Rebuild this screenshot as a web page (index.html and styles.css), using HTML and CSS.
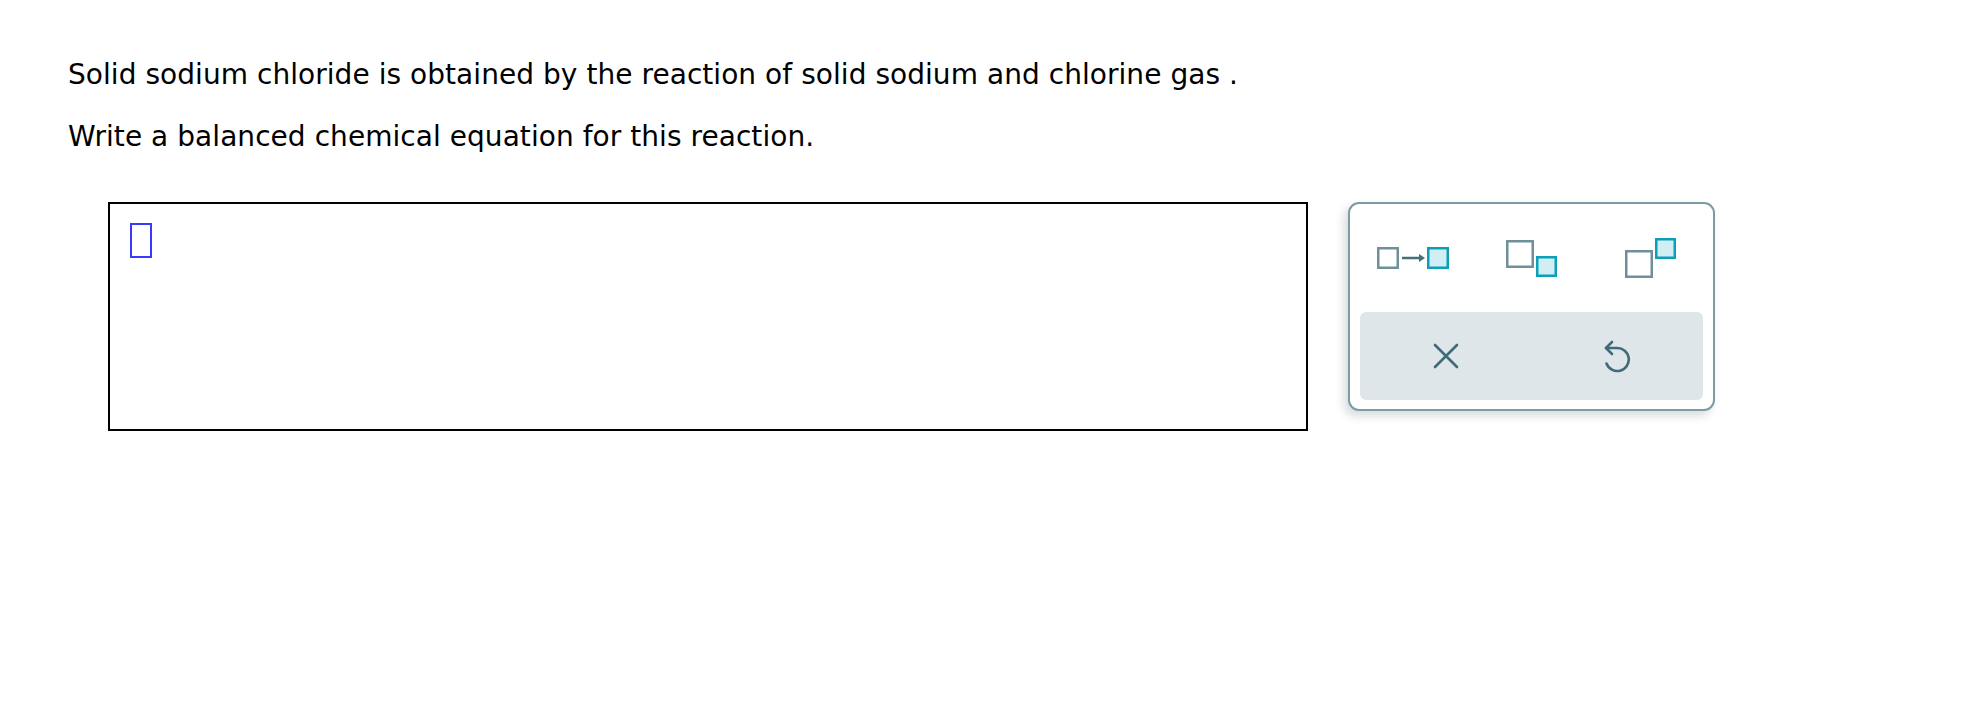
FILE: index.html
```html
<!DOCTYPE html>
<html>
<head>
<meta charset="utf-8">
<link rel="stylesheet" href="styles.css">
</head>
<body>
<div class="page">
  <p class="prompt">Solid sodium chloride is obtained by the reaction of solid sodium and chlorine gas .</p>
  <p class="prompt second">Write a balanced chemical equation for this reaction.</p>
  <div class="answer-row">
    <div class="answer-box"><span class="cursor"></span></div>
    <div class="palette">
      <div class="tools">
        <button class="tool">
          <svg width="72" height="22" viewBox="0 0 72 22">
            <rect x="1.25" y="1.25" width="19.5" height="19.5" fill="#fff" stroke="#6f909a" stroke-width="2.5"/>
            <line x1="25" y1="11" x2="44" y2="11" stroke="#456f7b" stroke-width="2.5"/>
            <polygon points="42,7 48,11 42,15" fill="#456f7b"/>
            <rect x="51.25" y="1.25" width="19.5" height="19.5" fill="#d0eef3" stroke="#0ba0b7" stroke-width="2.5"/>
          </svg>
        </button>
        <button class="tool">
          <svg width="51" height="37" viewBox="0 0 51 37">
            <rect x="1.25" y="1.25" width="25.5" height="25.5" fill="#fff" stroke="#6f909a" stroke-width="2.5"/>
            <rect x="31.25" y="17.25" width="18.5" height="18.5" fill="#d0eef3" stroke="#0ba0b7" stroke-width="2.5"/>
          </svg>
        </button>
        <button class="tool">
          <svg width="51" height="41" viewBox="0 0 51 41">
            <rect x="1.25" y="13.25" width="25.5" height="25.5" fill="#fff" stroke="#6f909a" stroke-width="2.5"/>
            <rect x="31.25" y="1.25" width="18.5" height="18.5" fill="#d0eef3" stroke="#0ba0b7" stroke-width="2.5"/>
          </svg>
        </button>
      </div>
      <div class="actions">
        <button class="action">
          <svg width="26" height="26" viewBox="0 0 26 26">
            <path d="M2 2 L24 24 M24 2 L2 24" stroke="#3f6b78" stroke-width="2.6" stroke-linecap="round" fill="none"/>
          </svg>
        </button>
        <button class="action">
          <svg width="30" height="34" viewBox="0 0 30 34">
            <path d="M4.5 24.5 A11.5 11.5 0 1 0 15 9 L4 9" stroke="#3f6b78" stroke-width="2.6" stroke-linecap="round" stroke-linejoin="round" fill="none"/>
            <path d="M10 3 L4 9 L10 15" stroke="#3f6b78" stroke-width="2.6" stroke-linecap="round" stroke-linejoin="round" fill="none"/>
          </svg>
        </button>
      </div>
    </div>
  </div>
</div>
</body>
</html>
```
FILE: styles.css
```css
html, body {
  margin: 0;
  padding: 0;
  background: #fff;
}

.page {
  padding: 58px 0 0 68px;
  font-family: "DejaVu Sans", Verdana, sans-serif;
  color: #000;
}

.prompt {
  margin: 0;
  font-size: 28px;
  line-height: 34px;
  letter-spacing: 0.05px;
}

.prompt.second {
  margin-top: 28px;
}

.answer-row {
  display: flex;
  align-items: flex-start;
  gap: 40px;
  margin-top: 48px;
  margin-left: 40px;
}

.answer-box {
  box-sizing: border-box;
  width: 1200px;
  height: 229px;
  border: 2px solid #000;
  padding: 19px 0 0 20px;
}

.cursor {
  display: block;
  box-sizing: border-box;
  width: 22px;
  height: 35px;
  border: 2px solid #3a3aff;
}

.palette {
  box-sizing: border-box;
  width: 367px;
  height: 209px;
  border: 2px solid #7d9ba4;
  border-radius: 11px;
  background: #fff;
  box-shadow: -4px 5px 10px rgba(40, 60, 70, 0.18);
  padding: 0 10px 9px 10px;
  display: flex;
  flex-direction: column;
}

.tools {
  display: flex;
  height: 108px;
  margin: 0 -7px;
}

.tool {
  flex: 1;
  border: 0;
  background: transparent;
  padding: 0;
  display: flex;
  align-items: center;
  justify-content: center;
}

.tool svg {
  display: block;
}

.actions {
  flex: 1;
  display: flex;
  background: #dfe6e9;
  border-radius: 6px;
}

.action {
  flex: 1;
  border: 0;
  background: transparent;
  padding: 0;
  display: flex;
  align-items: center;
  justify-content: center;
}

.action svg {
  display: block;
}
```
